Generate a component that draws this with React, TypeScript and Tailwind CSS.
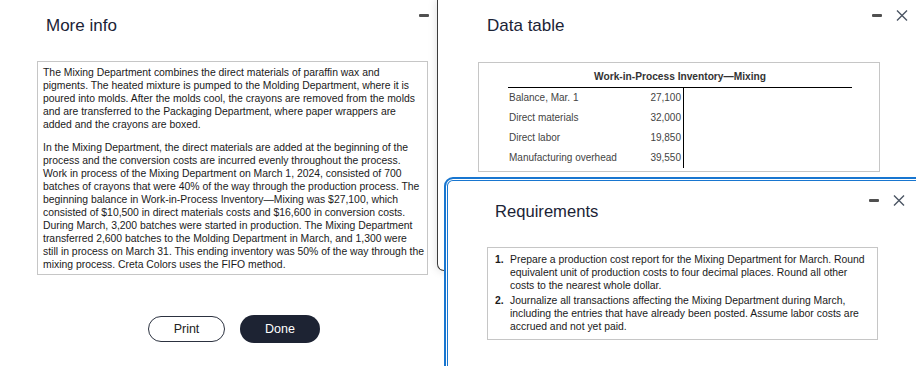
import React from "react"

const Minus = () => <div className="w-[10px] h-[3px] bg-[#505050] rounded-[1px]" />

const Close = () => (
    <svg width="12" height="11" viewBox="0 0 12 11" fill="none" xmlns="http://www.w3.org/2000/svg">
        <path d="M1 0.5L11 10.5M11 0.5L1 10.5" stroke="#4b5563" strokeWidth="1.4" />
    </svg>
)

const rows = [
    ["Balance, Mar. 1", "27,100"],
    ["Direct materials", "32,000"],
    ["Direct labor", "19,850"],
    ["Manufacturing overhead", "39,550"],
]

export default function App() {
    return (
        <div className="relative w-[916px] h-[366px] overflow-hidden bg-white font-['Liberation_Sans',Arial,sans-serif]">
            {/* More info window */}
            <div className="absolute left-0 top-0 w-[468px] h-[366px] bg-white">
                <div className="flex items-start justify-between pl-[46px] pr-[13px]">
                    <div className="mt-[16px] h-5 text-[17px] leading-5 text-[#1b2336]">More info</div>
                    <div className="mt-[9px] h-[12px] flex items-center gap-[14px]">
                        <Minus />
                        <Close />
                    </div>
                </div>
                <div className="mt-[25px] ml-[37px] w-[391px] border border-[#c6c6c6] pt-[4px] pb-[3px] pl-[5px] pr-[3px] text-[10.4px] leading-[13px] text-[#1a1a1a]">
                    <p>
                        The Mixing Department combines the direct materials of paraffin wax and pigments. The heated mixture is pumped to the Molding Department, where it is poured into molds. After the molds cool, the crayons are removed from the molds and are transferred to the Packaging Department, where paper wrappers are added and the crayons are boxed.
                    </p>
                    <p className="mt-[10px]">
                        In the Mixing Department, the direct materials are added at the beginning of the process and the conversion costs are incurred evenly throughout the process. Work in process of the Mixing Department on March 1, 2024, consisted of 700 batches of crayons that were 40% of the way through the production process. The beginning balance in Work-in-Process Inventory—Mixing was $27,100, which consisted of $10,500 in direct materials costs and $16,600 in conversion costs. During March, 3,200 batches were started in production. The Mixing Department transferred 2,600 batches to the Molding Department in March, and 1,300 were still in process on March 31. This ending inventory was 50% of the way through the mixing process. Creta Colors uses the FIFO method.
                    </p>
                </div>
                <div className="mt-[40px] flex items-center justify-center gap-[15px]">
                    <button className="w-[77px] h-[26px] rounded-full border-[1.5px] border-[#2c3240] text-[12.5px] text-[#222]">Print</button>
                    <button className="w-[80px] h-[28px] rounded-full bg-[#1d2333] text-[12.5px] text-white">Done</button>
                </div>
            </div>

            {/* Data table window */}
            <div className="absolute left-[437px] top-0 w-[500px] h-[271px] bg-white border-l border-b border-[#3a3a3a] rounded-bl-[7px] shadow-[0_0_10px_rgba(0,0,0,0.15)]">
                <div className="flex items-start justify-between pl-[49px] pr-[29px]">
                    <div className="mt-[16px] h-5 text-[17px] leading-5 text-[#1b2336]">Data table</div>
                    <div className="mt-[9px] h-[12px] flex items-center gap-[14px]">
                        <Minus />
                        <Close />
                    </div>
                </div>
                <div className="mt-[26px] ml-[40px] w-[402px] border border-[#c6c6c6] pt-[8px] pb-[3px] pl-[29px]">
                    <div className="w-[344px]">
                        <div className="text-center text-[10.2px] leading-[12px] font-bold text-[#333] pb-[4px] border-b border-black">
                            Work-in-Process Inventory—Mixing
                        </div>
                        <div className="flex">
                            <div className="w-[176px] border-r border-black pr-[2px]">
                                {rows.map(([label, value]) => (
                                    <div key={label} className="flex justify-between h-5 leading-5 text-[10px] text-[#444] pl-[1px]">
                                        <span>{label}</span>
                                        <span>{value}</span>
                                    </div>
                                ))}
                            </div>
                            <div className="flex-1" />
                        </div>
                    </div>
                </div>
            </div>

            {/* Requirements window */}
            <div className="absolute left-[444px] top-[177px] w-[500px] h-[220px] bg-white border-2 border-[#1876d0] rounded-tl-[9px] shadow-[inset_0_0_0_1px_#ffffff,inset_0_0_0_2px_#1876d0]">
                <div className="flex items-start justify-between pl-[49px] pr-[37px]">
                    <div className="mt-[23px] h-5 text-[16.6px] leading-5 text-[#1b2336]">Requirements</div>
                    <div className="mt-[15px] h-[12px] flex items-center gap-[14px]">
                        <Minus />
                        <Close />
                    </div>
                </div>
                <ol className="mt-[25px] ml-[41px] w-[391px] border border-[#c6c6c6] pt-[5px] pb-[6px] pl-[7px] pr-[8px] text-[10.4px] leading-[13px] text-[#1a1a1a] flex flex-col gap-[2px]">
                    <li className="flex">
                        <span className="w-[15px] shrink-0 font-bold">1.</span>
                        <span>Prepare a production cost report for the Mixing Department for March. Round equivalent unit of production costs to four decimal places. Round all other costs to the nearest whole dollar.</span>
                    </li>
                    <li className="flex">
                        <span className="w-[15px] shrink-0 font-bold">2.</span>
                        <span>Journalize all transactions affecting the Mixing Department during March, including the entries that have already been posted. Assume labor costs are accrued and not yet paid.</span>
                    </li>
                </ol>
            </div>
        </div>
    )
}
